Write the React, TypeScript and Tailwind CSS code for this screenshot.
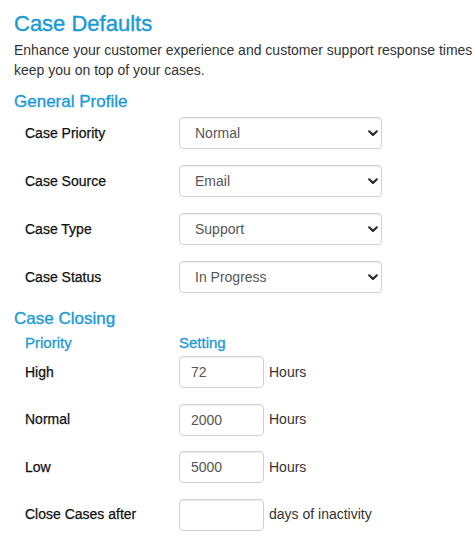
import React from "react";

const Chevron = () => (
  <svg
    width="10"
    height="7"
    viewBox="0 0 10 7"
    className="pointer-events-none absolute right-[4px] top-[13px]"
  >
    <path d="M1.2 1.3 L5 5 L8.8 1.3" fill="none" stroke="#2b2b2b" strokeWidth="2.2" strokeLinecap="round" strokeLinejoin="round" />
  </svg>
);

function SelectRow({ label, value, options }: { label: string; value: string; options: string[] }) {
  return (
    <div className="flex items-center h-[32px]">
      <div className="w-[165px] shrink-0 pl-[11px] text-[14px] text-[#111] [-webkit-text-stroke:0.25px_#111]">{label}</div>
      <div className="relative w-[203px] h-[32px]">
        <select
          defaultValue={value}
          className="appearance-none w-full h-full rounded-[4px] border border-[#d2d2d2] bg-white pl-[15px] pr-[20px] text-[14px] text-[#555] shadow-[inset_0_1px_1px_rgba(0,0,0,0.075)] outline-none"
          style={{ fontFamily: '"Liberation Sans", Arial, sans-serif' }}
        >
          {options.map((o) => (
            <option key={o}>{o}</option>
          ))}
        </select>
        <Chevron />
      </div>
    </div>
  );
}

function InputRow({ label, value, unit }: { label: string; value: string; unit: string }) {
  return (
    <div className="flex items-center h-[32px]">
      <div className="w-[165px] shrink-0 pl-[11px] text-[14px] text-[#111] [-webkit-text-stroke:0.25px_#111]">{label}</div>
      <input
        defaultValue={value}
        className="w-[85px] h-[32px] rounded-[4px] border border-[#d2d2d2] bg-white px-[11px] text-[14px] text-[#555] shadow-[inset_0_1px_1px_rgba(0,0,0,0.075)] outline-none"
        style={{ fontFamily: '"Liberation Sans", Arial, sans-serif' }}
      />
      <span className="ml-[5px] text-[14px] text-[#333]">{unit}</span>
    </div>
  );
}

export default function App() {
  return (
    <div
      className="w-[474px] h-[554px] bg-white pl-[14px] pt-[12px] overflow-hidden"
      style={{ fontFamily: '"Liberation Sans", Arial, sans-serif' }}
    >
      <h1 className="text-[22px] leading-[24px] text-[#1b9ad6] [-webkit-text-stroke:0.4px_#1b9ad6]">Case Defaults</h1>
      <p className="mt-[4px] text-[14px] leading-[20px] text-[#333] whitespace-nowrap">
        <span className="block">Enhance your customer experience and customer support response times</span>
        <span className="block">keep you on top of your cases.</span>
      </p>
      <h2 className="mt-[12px] text-[17px] leading-[20px] text-[#1b9ad6] [-webkit-text-stroke:0.35px_#1b9ad6]">General Profile</h2>
      <div className="mt-[5px] flex flex-col gap-[16px]">
        <SelectRow label="Case Priority" value="Normal" options={["High", "Normal", "Low"]} />
        <SelectRow label="Case Source" value="Email" options={["Email", "Phone", "Web"]} />
        <SelectRow label="Case Type" value="Support" options={["Support", "Sales", "Billing"]} />
        <SelectRow label="Case Status" value="In Progress" options={["New", "In Progress", "Closed"]} />
      </div>
      <h2 className="mt-[16px] text-[17px] leading-[20px] text-[#1b9ad6] [-webkit-text-stroke:0.35px_#1b9ad6]">Case Closing</h2>
      <div className="mt-[4px] flex items-center h-[20px] text-[15px] text-[#1b9ad6] [-webkit-text-stroke:0.3px_#1b9ad6]">
        <div className="w-[165px] shrink-0 pl-[11px]">Priority</div>
        <div>Setting</div>
      </div>
      <div className="mt-[3px] flex flex-col gap-[15.5px]">
        <InputRow label="High" value="72" unit="Hours" />
        <InputRow label="Normal" value="2000" unit="Hours" />
        <InputRow label="Low" value="5000" unit="Hours" />
        <InputRow label="Close Cases after" value="" unit="days of inactivity" />
      </div>
    </div>
  );
}
